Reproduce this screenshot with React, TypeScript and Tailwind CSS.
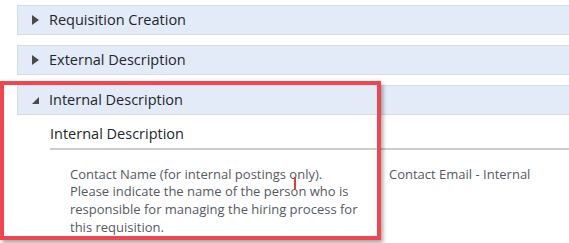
import type { ReactElement } from 'react';

function Header({ title, open }: { title: string; open?: boolean }): ReactElement {
  return (
    <div className="h-[30px] flex items-center bg-[#e2ebf7] border border-r-0 border-[#d4dce6] pl-[13px]">
      {open ? (
        <svg width="9" height="9" viewBox="0 0 9 9" className="mr-[9px] mt-[1px]">
          <polygon points="8,1 8,8 1,8" fill="#4a4a4a" />
        </svg>
      ) : (
        <svg width="8" height="10" viewBox="0 0 8 10" className="mr-[9px] ml-[1px]">
          <polygon points="0,0 7,5 0,10" fill="#4a4a4a" />
        </svg>
      )}
      <span className="text-[14.5px] text-[#22262c] font-medium">{title}</span>
    </div>
  );
}

export default function App(): ReactElement {
  return (
    <div className="relative w-[569px] h-[243px] bg-white overflow-hidden" style={{ fontFamily: '"Open Sans", sans-serif' }}>
      <div className="pt-[5px] pl-[17px] flex flex-col gap-[10px]">
        <Header title="Requisition Creation" />
        <Header title="External Description" />
        <div>
          <Header title="Internal Description" open />
          <div className="pl-[33px]">
            <div className="pt-[8px] pb-[3px] border-b-2 border-[#cccccc] text-[14.5px] text-[#22262c] font-medium">
              Internal Description
            </div>
            <div className="flex pt-[16px] pl-[20px] text-[13px] leading-[17.6px] text-[#555a62]">
              <div className="w-[293px] shrink-0">
                Contact Name (for internal postings only). Please indicate the name of the person who is responsible
                for managing the hiring process for this requisition.
              </div>
              <div className="ml-[26px]">Contact Email - Internal</div>
            </div>
          </div>
        </div>
      </div>
      <div className="absolute left-0 top-[81px] w-[381px] h-[159px] border-[4px] border-[#f2454d] shadow-[2px_3px_4px_rgba(0,0,0,0.35)]" />
      <div className="absolute left-[294px] top-[177px] w-[2px] h-[12px] bg-[#e8383f]" />
    </div>
  );
}
